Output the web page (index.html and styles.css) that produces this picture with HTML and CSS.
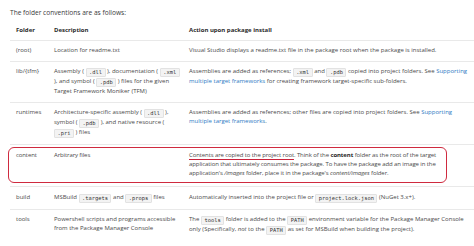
FILE: index.html
```html
<!DOCTYPE html>
<html lang="en">
<head>
<meta charset="utf-8">
<title>Folder conventions</title>
<link rel="stylesheet" href="styles.css">
</head>
<body>
<div class="page">
  <p class="intro">The folder conventions are as follows:</p>
  <div class="table-wrap">
    <table class="conv">
      <colgroup>
        <col class="c-folder">
        <col class="c-desc">
        <col class="c-action">
      </colgroup>
      <thead>
        <tr><th>Folder</th><th>Description</th><th>Action upon package install</th></tr>
      </thead>
      <tbody>
        <tr>
          <td>(root)</td>
          <td>Location for readme.txt</td>
          <td>Visual Studio displays a readme.txt file in the package root when the package is installed.</td>
        </tr>
        <tr>
          <td>lib/{tfm}</td>
          <td>Assembly ( <code>.dll</code> ), documentation ( <code>.xml</code> ), and symbol ( <code>.pdb</code> ) files for the given Target Framework Moniker (TFM)</td>
          <td>Assemblies are added as references; <code>.xml</code> and <code>.pdb</code> copied into project folders. See <a href="#">Supporting multiple target frameworks</a> for creating framework target-specific sub-folders.</td>
        </tr>
        <tr>
          <td>runtimes</td>
          <td>Architecture-specific assembly ( <code>.dll</code> ), symbol ( <code>.pdb</code> ), and native resource ( <code>.pri</code> ) files</td>
          <td>Assemblies are added as references; other files are copied into project folders. See <a href="#">Supporting multiple target frameworks</a>.</td>
        </tr>
        <tr class="hl">
          <td class="hl-first">content</td>
          <td>Arbitrary files</td>
          <td><span class="ul">Contents are copied to the project root</span>. Think of the <b>content</b> folder as the root of the target application that ultimately consumes the package. To have the package add an image in the application's <i>/images</i> folder, place it in the package's <i>content/images</i> folder.</td>
        </tr>
        <tr>
          <td>build</td>
          <td>MSBuild <code>.targets</code> and <code>.props</code> files</td>
          <td>Automatically inserted into the project file or <code>project.lock.json</code> (NuGet 3.x+).</td>
        </tr>
        <tr>
          <td>tools</td>
          <td>Powershell scripts and programs accessible from the Package Manager Console</td>
          <td>The <code>tools</code> folder is added to the <code>PATH</code> environment variable for the Package Manager Console only (Specifically, <i>not</i> to the <code>PATH</code> as set for MSBuild when building the project).</td>
        </tr>
      </tbody>
    </table>
  </div>
</div>
</body>
</html>
```

FILE: styles.css
```css
html, body {
  margin: 0;
  padding: 0;
  background: #ffffff;
}

.page {
  padding: 8px 0 0 10px;
  font-family: "Segoe UI", "Open Sans", "Noto Sans", sans-serif;
  color: #4a4a4a;
}

.intro {
  margin: 0 0 6px 0;
  font-size: 6.6px;
  line-height: 9px;
  color: #3a3a3a;
}

.table-wrap {
  width: 464px;
}

.conv {
  width: 100%;
  border-collapse: collapse;
  table-layout: fixed;
  font-size: 6px;
  line-height: 9px;
}

.c-folder { width: 38px; }
.c-desc { width: 135px; }

.conv th,
.conv td {
  text-align: left;
  vertical-align: top;
  padding: 5px 6px 6px 6px;
  border-bottom: 1px solid #e9e9e9;
}

.conv td:nth-child(2) {
  padding-right: 3px;
}

.conv th {
  font-weight: 700;
  color: #2a2a2a;
  padding-top: 3px;
  padding-bottom: 5px;
}

.conv tbody tr:last-child td {
  border-bottom: none;
}

.conv .hl td {
  padding-top: 6px;
  padding-bottom: 8px;
  letter-spacing: -0.1px;
}

.conv .hl td:last-child {
  padding-right: 28px;
}

.conv .hl + tr td {
  padding-top: 6px;
}

.conv code {
  display: inline-block;
  font-family: "DejaVu Sans Mono", "Liberation Mono", monospace;
  font-size: 5.4px;
  line-height: 7px;
  background: #f3f3f3;
  border: 1px solid #e2e2e2;
  border-radius: 1px;
  padding: 0 2.5px;
  color: #333;
  vertical-align: -1px;
}

.conv a {
  color: #2e7bc4;
  text-decoration: none;
}

.conv b {
  color: #1f1f1f;
}

.hl-first {
  position: relative;
}

.hl-first::after {
  content: "";
  position: absolute;
  left: -2px;
  width: 439px;
  top: 2px;
  bottom: 3px;
  box-sizing: border-box;
  border: 1.5px solid #cf2a3f;
  border-radius: 6px;
  pointer-events: none;
}

.ul {
  text-decoration: underline;
  text-decoration-color: #c8223a;
  text-decoration-thickness: 1.3px;
  text-underline-offset: 1.5px;
}
```
